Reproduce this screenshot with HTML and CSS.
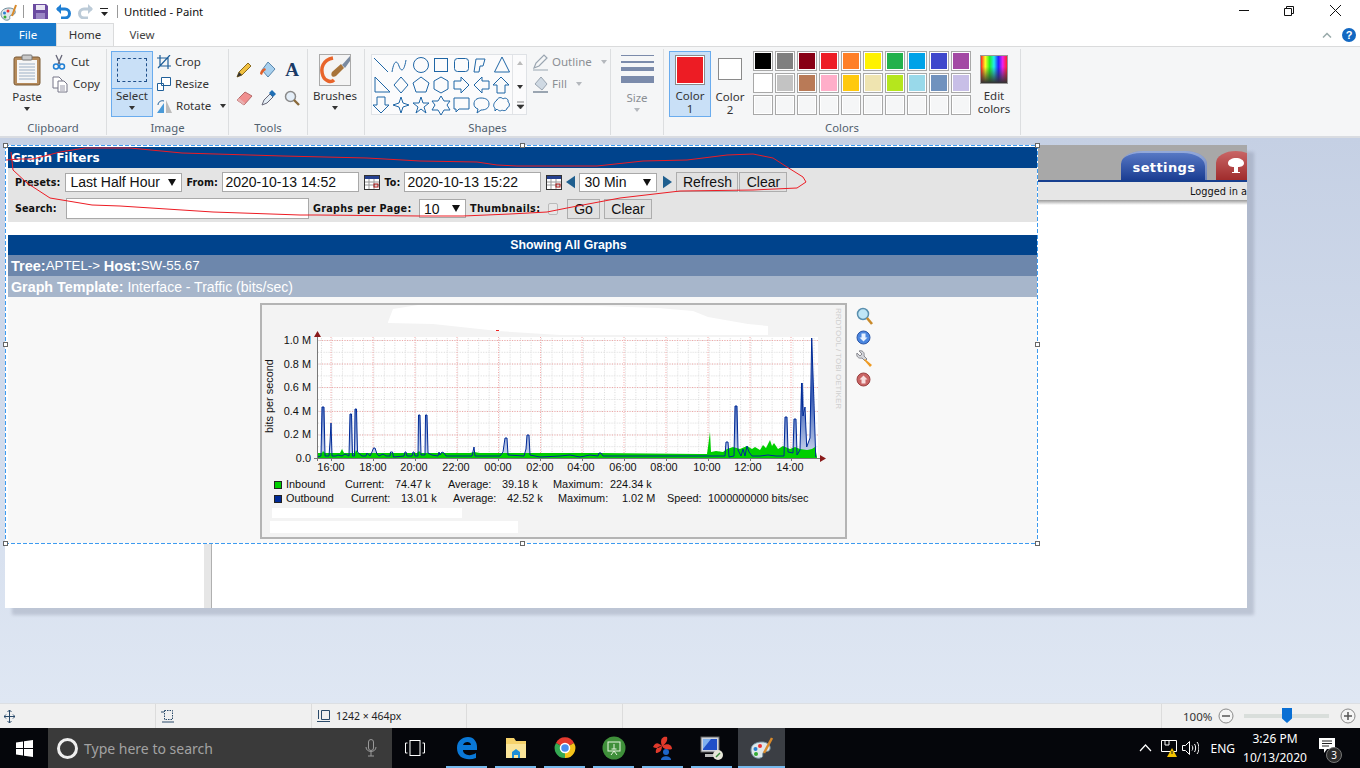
FILE: index.html
```html
<!DOCTYPE html>
<html lang="en">
<head>
<meta charset="utf-8">
<title>Untitled - Paint</title>
<link rel="stylesheet" href="styles.css">
</head>
<body>
<div class="app">
  <header class="titlebar">
    <svg class="ti app-ico" width="18" height="20" viewBox="0 0 18 20"><path d="M1 12c0-4 4-6 8-6s7 2 6 5-4 1-5 3 1 3-2 4-7-2-7-6z" fill="#dfe7ea" stroke="#6b8a99"/><circle cx="4.500" cy="11" r="1.500" fill="#2a7fd0"/><circle cx="8" cy="9" r="1.500" fill="#e33"/><circle cx="5" cy="15" r="1.500" fill="#3a3"/><path d="M12 14L16 3" stroke="#d98a2b" stroke-width="2"/></svg>
    <i class="tsep sep1"></i>
    <svg class="ti save" width="15" height="15" viewBox="0 0 15 15"><path d="M0 0h13l2 2v13H0z" fill="#6a4aa0"/><path d="M3 1h9v5H3z" fill="#e8e4f2"/><path d="M3 9h9v6H3z" fill="#9a86c4"/></svg>
    <svg class="ti undo" width="15" height="15" viewBox="0 0 15 15"><path d="M1 5h8a4 4 0 0 1 0 9H5" fill="none" stroke="#1f7fd4" stroke-width="3"/><path d="M0 5l5-5v10z" fill="#1f7fd4"/></svg>
    <svg class="ti redo" width="15" height="15" viewBox="0 0 15 15"><path d="M14 5H6a4 4 0 0 0 0 9h4" fill="none" stroke="#bccbd8" stroke-width="3"/><path d="M15 5l-5-5v10z" fill="#bccbd8"/></svg>
    <svg class="ti qcaret" width="9" height="8" viewBox="0 0 9 8"><path d="M0 0h8v1H0zM1 4h7L4.500 8z" fill="#222"/></svg>
    <i class="tsep sep2"></i>
    <span class="wintitle">Untitled - Paint</span>
    <div class="winbtns">
      <svg width="46" height="23" viewBox="0 0 46 23"><path d="M18 10.500h10" stroke="#111"/></svg>
      <svg width="46" height="23" viewBox="0 0 46 23"><path d="M17.500 8.500h7v7h-7zM19.500 8.500v-2h7v7h-2" fill="none" stroke="#111"/></svg>
      <svg width="46" height="23" viewBox="0 0 46 23"><path d="M17 5l11 11M28 5L17 16" stroke="#111"/></svg>
    </div>
  </header>

  <nav class="tabs">
    <span class="tab file">File</span>
    <span class="tab home">Home</span>
    <span class="tab view">View</span>
    <div class="helpbox">
      <svg width="10" height="6" viewBox="0 0 10 6"><path d="M1 5.500l4-4 4 4" fill="none" stroke="#9aa" stroke-width="1.500"/></svg>
      <span class="help">?</span>
    </div>
  </nav>

  <section class="ribbon">
    <div class="group g-clip">
      <div class="gbody">
        <div class="big paste">
          <svg class="big-ico" width="28" height="32" viewBox="0 0 28 32"><rect x="1" y="3" width="26" height="28" rx="2" fill="#b58a5a" stroke="#7a5a36"/><rect x="4" y="6" width="20" height="23" fill="#f6f6f6"/><path d="M6 10h16M6 13h16M6 16h16M6 19h16M6 22h16M6 25h16" stroke="#9db0c6"/><rect x="9" y="1" width="10" height="5" rx="1" fill="#c9c9c9" stroke="#777"/></svg>
          <span class="lab">Paste</span><i class="caret"></i>
        </div>
        <div class="smalls s-clip">
          <div class="sm"><svg width="14" height="16" viewBox="0 0 14 16"><path d="M4 1l4 9M10 1L6 10" stroke="#667" stroke-width="1.300"/><circle cx="4" cy="12.500" r="2.500" fill="none" stroke="#1f7fd4" stroke-width="1.500"/><circle cx="10" cy="12.500" r="2.500" fill="none" stroke="#1f7fd4" stroke-width="1.500"/></svg><span>Cut</span></div>
          <div class="sm"><svg width="16" height="17" viewBox="0 0 16 17"><path d="M1 1h6l3 3v8H1z" fill="#fff" stroke="#778"/><path d="M6 5h6l3 3v8H6z" fill="#fff" stroke="#778"/><path d="M8 10h5M8 12h5M8 14h5" stroke="#99a"/></svg><span>Copy</span></div>
        </div>
      </div>
      <div class="glabel">Clipboard</div>
    </div>

    <div class="group g-image">
      <div class="gbody">
        <div class="selectbtn">
          <div class="sel-top"><i class="sel-dash"></i></div>
          <div class="sel-bot"><span class="lab">Select</span><i class="caret"></i></div>
        </div>
        <div class="smalls s-image">
          <div class="sm"><svg width="14" height="14" viewBox="0 0 14 14"><path d="M3 0v11h11M0 3h11v11M13 0L1 13" fill="none" stroke="#1f5f99" stroke-width="1.200"/></svg><span>Crop</span></div>
          <div class="sm"><svg width="14" height="14" viewBox="0 0 14 14"><path d="M4.500.500h9v8h-9zM.500 6.500h6v7h-6z" fill="#fff" stroke="#1f5f99"/></svg><span>Resize</span></div>
          <div class="sm"><svg width="15" height="14" viewBox="0 0 15 14"><path d="M9 1v13h6z" fill="#bbb"/><path d="M7 14V4L0 14z" fill="#4a9ad8"/><path d="M1 6c0-3 3-5 6-4" fill="none" stroke="#1f5f99"/></svg><span>Rotate</span><i class="caret inline"></i></div>
        </div>
      </div>
      <div class="glabel">Image</div>
    </div>

    <div class="group g-tools">
      <div class="gbody">
        <div class="toolgrid">
          <svg width="16" height="16" viewBox="0 0 16 16"><path d="M1 15l2-5L12 1l3 3-9 9z" fill="#f0c040" stroke="#8a6a20"/><path d="M1 15l2-5 3 3z" fill="#333"/></svg>
          <svg width="18" height="18" viewBox="0 0 18 18"><path d="M9 1l7 7-7 8-6-7z" fill="#a8d0ee" stroke="#5a87ad"/><path d="M1 13c0-3 2-5 5-6l1 2c-2 1-3 2-4 5z" fill="#e0602a"/></svg>
          <span class="aglyph">A</span>
          <svg width="17" height="15" viewBox="0 0 17 15"><path d="M1 9l8-8 7 4-8 9z" fill="#f08f8f" stroke="#b56a6a"/><path d="M1 9l7 5 1-2-6-5z" fill="#e8b0b0"/></svg>
          <svg width="15" height="16" viewBox="0 0 15 16"><path d="M1 15l2-5 6-6 3 3-6 6z" fill="#e4eef6" stroke="#667"/><path d="M8 3l3-3 4 4-3 3z" fill="#1f6fb5"/></svg>
          <svg width="16" height="16" viewBox="0 0 16 16"><circle cx="6.500" cy="6.500" r="5" fill="#e4eef8" stroke="#8a8a8a" stroke-width="1.500"/><path d="M10 10l5 5" stroke="#8a6a3a" stroke-width="2.400"/></svg>
        </div>
      </div>
      <div class="glabel">Tools</div>
    </div>

    <div class="group g-brush">
      <div class="gbody">
        <div class="big brushes">
          <svg class="big-ico" width="32" height="32" viewBox="0 0 32 32"><rect x=".5" y=".5" width="31" height="31" fill="#f4f4f4" stroke="#aaa"/><path d="M14 4C4 6 1 14 4 22c2 5 8 7 11 4" fill="none" stroke="#e8642a" stroke-width="3.500"/><path d="M13 18l9-8 3 4-8 8c-3 2-6 0-4-4z" fill="#a8743a"/><path d="M23 11l8-9v5l-5 7z" fill="#7a8aa0"/></svg>
          <span class="lab">Brushes</span><i class="caret"></i>
        </div>
      </div>
      <div class="glabel wide">&nbsp;</div>
    </div>

    <div class="group g-shapes">
      <div class="gbody shapes-body">
        <div class="gallery">
          <svg width="141" height="60" viewBox="371 54 141 60" fill="none" stroke="#1f66a6" stroke-width="1">
            <path d="M374 57l14 14M392 71c2-12 5-12 7-6s5 6 7-6"/><circle cx="421" cy="64" r="7.500"/><rect x="434.500" y="57.500" width="13" height="13"/><rect x="454.500" y="57.500" width="14" height="13" rx="3"/><path d="M474 71l2-13h9l-2 7h-3l-1 6zM502 56l7.500 15h-15z"/>
            <path d="M375 76v15h15zM401 76l7 8-7 8-7-8zM421 76l8 6-3 9h-10l-3-9zM441 76l7 4v8l-7 4-7-4v-8zM454 80h7v-4l8 8-8 8v-4h-7zM489 80h-7v-4l-8 8 8 8v-4h7zM501 76l8 8h-4v8h-8v-8h-4z"/>
            <path d="M377 96h8v8h4l-8 8-8-8h4zM401 96l2 6 6 2-6 2-2 6-2-6-6-2 6-2zM421 96l2 6h6l-5 4 2 6-5-4-5 4 2-6-5-4h6zM441 95l3 5h6l-3 4 3 5h-6l-3 5-3-5h-6l3-5-3-4h6z"/>
            <path d="M454 97h15v11h-10l-3 3v-3h-2zM481 97c5 0 8 2 8 6s-3 6-8 6l-4 3 1-4c-3-1-4-3-4-5 0-4 3-6 7-6zM497 99c1-3 5-3 6-1 2-2 6 0 5 3 2 1 2 5-1 6 0 3-4 3-5 2-2 2-4 0-5-1l-2 2v-3c-2-1-2-5 2-8z"/>
          </svg>
          <div class="gscroll">
            <svg width="15" height="60" viewBox="0 0 15 60"><path d="M4 22l3-4 3 4z" fill="#bbb" transform="translate(0 -12)"/><path d="M4 30h6l-3 4z" fill="#333"/><path d="M4 47h7M4 50h7l-3.500 4z" stroke="#333" fill="#333" stroke-width=".6"/></svg>
          </div>
        </div>
        <div class="smalls s-shape">
          <div class="sm dim"><svg width="15" height="17" viewBox="0 0 15 17"><path d="M1 14l2-5 8-8 3 3-8 8zM0 16h15" fill="#f5f6f7" stroke="#9aa5b1" stroke-width="1.200"/></svg><span>Outline</span><i class="caret inline pale"></i></div>
          <div class="sm dim"><svg width="15" height="17" viewBox="0 0 15 17"><path d="M8 1l6 7-5 6-7-6z" fill="#cfd9e3" stroke="#9aa5b1"/><path d="M0 16h15" stroke="#9aa5b1" stroke-width="2"/></svg><span>Fill</span><i class="caret inline pale"></i></div>
        </div>
      </div>
      <div class="glabel">Shapes</div>
    </div>

    <div class="group g-size">
      <div class="gbody">
        <div class="big size">
          <div class="lines"><i class="l1"></i><i class="l2"></i><i class="l3"></i><i class="l4"></i></div>
          <span class="lab gray">Size</span><i class="caret pale"></i>
        </div>
      </div>
      <div class="glabel wide">&nbsp;</div>
    </div>

    <div class="group g-colors">
      <div class="gbody">
        <div class="colorbtn active"><i class="swatch red"></i><span class="lab">Color<br>1</span></div>
        <div class="colorbtn"><i class="swatch white"></i><span class="lab">Color<br>2</span></div>
        <div class="palette">
          <i class="c c1"></i><i class="c c2"></i><i class="c c3"></i><i class="c c4"></i><i class="c c5"></i><i class="c c6"></i><i class="c c7"></i><i class="c c8"></i><i class="c c9"></i><i class="c c10"></i>
          <i class="c c11"></i><i class="c c12"></i><i class="c c13"></i><i class="c c14"></i><i class="c c15"></i><i class="c c16"></i><i class="c c17"></i><i class="c c18"></i><i class="c c19"></i><i class="c c20"></i>
          <i class="c"></i><i class="c"></i><i class="c"></i><i class="c"></i><i class="c"></i><i class="c"></i><i class="c"></i><i class="c"></i><i class="c"></i><i class="c"></i>
        </div>
        <div class="editcolors"><i class="rainbow"></i><span class="lab">Edit<br>colors</span></div>
      </div>
      <div class="glabel">Colors</div>
    </div>
  </section>

  <main class="canvas">
    <div class="page">
      <div class="under">
        <div class="u-head">
          <span class="ptab settings">settings</span>
          <span class="ptab redtab"><svg width="18" height="17" viewBox="0 0 18 17"><path d="M9 1c4 0 8 2 8 5s-3 4-6 4v5h2v1H5v-1h2v-5C4 10 1 9 1 6s4-5 8-5z" fill="#fff"/></svg></span>
        </div>
        <div class="u-line"></div>
        <div class="u-login"><span>Logged in a</span></div>
        <div class="u-shadow"></div>
        <div class="u-body"><div class="u-side"></div><div class="u-gut"></div><div class="u-main"></div></div>
      </div>

      <div class="selection">
        <div class="bar filterhead">Graph Filters</div>
        <div class="filters">
          <div class="frow">
            <b class="flabel presets">Presets:</b>
            <span class="fsel fs-preset">Last Half Hour<i class="arrow"></i></span>
            <b class="flabel from">From:</b>
            <span class="finp fi-date">2020-10-13 14:52</span>
            <svg class="cal" width="16" height="16" viewBox="0 0 16 16"><rect x=".5" y="1.500" width="15" height="14" fill="#fff" stroke="#333"/><path d="M1 2h14v3H1z" fill="#25408f"/><path d="M1 8h14M1 11h14M5 5v10M10 5v10" stroke="#999"/><rect x="10" y="10" width="4" height="3" fill="none" stroke="#a11"/></svg>
            <b class="flabel to">To:</b>
            <span class="finp fi-date">2020-10-13 15:22</span>
            <svg class="cal" width="16" height="16" viewBox="0 0 16 16"><rect x=".5" y="1.500" width="15" height="14" fill="#fff" stroke="#333"/><path d="M1 2h14v3H1z" fill="#25408f"/><path d="M1 8h14M1 11h14M5 5v10M10 5v10" stroke="#999"/><rect x="10" y="10" width="4" height="3" fill="none" stroke="#a11"/></svg>
            <svg class="nav left" width="9" height="14" viewBox="0 0 10 14"><path d="M10 0v14L0 7z" fill="#1f5f8f"/></svg>
            <span class="fsel fs-span">30 Min<i class="arrow"></i></span>
            <svg class="nav right" width="9" height="14" viewBox="0 0 10 14"><path d="M0 0v14l10-7z" fill="#1f5f8f"/></svg>
            <span class="fbtn refresh">Refresh</span>
            <span class="fbtn clear1">Clear</span>
          </div>
          <div class="frow second">
            <b class="flabel search">Search:</b>
            <span class="finp fi-search"></span>
            <b class="flabel perpage">Graphs per Page:</b>
            <span class="fsel fs-count">10<i class="arrow"></i></span>
            <b class="flabel thumbs">Thumbnails:</b>
            <i class="check"></i>
            <span class="fbtn go">Go</span>
            <span class="fbtn clear2">Clear</span>
          </div>
        </div>
        <div class="spacer"></div>
        <div class="bar showing">Showing All Graphs</div>
        <div class="tree"><b>Tree:</b>APTEL-&gt; <b>Host:</b>SW-55.67</div>
        <div class="tmpl"><b>Graph Template:</b> Interface - Traffic (bits/sec)</div>
        <div class="graphrow">
          <svg class="chart" width="587" height="236" viewBox="260 303 587 236">
            <defs>
              <pattern id="minor" x="321" y="340" width="10.480" height="11.800" patternUnits="userSpaceOnUse"><path d="M.5 0v11.800M0 .5h10.480" stroke="#d6d6d6" stroke-dasharray="1 1.500" fill="none"/></pattern>
              <linearGradient id="spike" gradientUnits="userSpaceOnUse" x1="0" y1="400" x2="0" y2="458"><stop offset="0" stop-color="#3f62b8"/><stop offset="1" stop-color="#d3dcf0"/></linearGradient>
            </defs>
            <rect x="261" y="304" width="585" height="234" fill="#f3f3f3" stroke="#b4b4b4" stroke-width="2"/>
            <rect x="317" y="337" width="501" height="121" fill="#fff"/>
            <rect x="317" y="337" width="501" height="121" fill="url(#minor)"/>
            <path class="major" d="M317 340.500h501M317 364h501M317 387.500h501M317 411.500h501M317 435h501M331 337v121M373 337v121M415 337v121M457 337v121M498.500 337v121M540.500 337v121M582 337v121M624 337v121M666 337v121M708 337v121M750 337v121M791 337v121"/>
            <polygon class="outfill" points="321,456 322,407 324,407 325,456 329,456 330,442 331,423 332,456 349,456 350,414 351.500,414 352.500,456 354.500,456 355,409 356.500,409 357.500,456 372,456 373.500,448 375,448 377,456 418,456 418.500,415 420,415 421,456 425,456 425.500,415 427,415 428,456 472,456 474,447 475,456 503,456 505,438 507,438 508,456 525,456 527,435 529,435 530,456 725,456 726,442 728,442 729,456 734,456 735,406 737,406 738,456 784,456 785,417 787,417 788,456 793,456 794,419 796,419 797,456 800,456 801,383 803,383 804,416 805,407 807,447 810,438 812,338 814,412 816,457"/>
            <polygon class="inbound" points="317,458 317,453 322,453 323,451 325,453 340,453 342,449 344,453 355,453 356,450 358,453 417,453 419,451 421,453 470,453 474,452 480,453 600,453 700,454 707,454 708,447 710,432 711,452 716,451 723,452 727,449 733,447 740,449 747,446 752,449 755,447 760,450 763,445 766,448 770,440 772,446 774,443 778,449 783,446 790,449 795,447 800,449 807,450 812,449 815,447 817,457 817,458"/>
            <polyline class="outbound" points="317,457 321,456 322,407 324,407 325,456 329,456 330,442 331,423 332,456 336,456 338,455 342,456 345,454 349,456 350,414 351.500,414 352.500,456 354.500,456 355,409 356.500,409 357.500,452 362,456 366,456 367,453 370,456 372,452 373.500,448 375,448 377,454 379,456 383,454 386,456 390,456 390.500,452 392.500,452 393.500,457 404,456 405,452 406,452 407,456 412,456 413,452 414,452 415,456 418,456 418.500,415 420,415 421,455 425,455 425.500,415 427,415 428,453 432,455 438,456 439,452 440,455 442,452 444,453 446,456 472,456 474,447 475,456 500,456 503,452 505,438 507,438 508,455 524,456 526,449 527,435 529,435 530,455 540,457 560,456 570,455 580,457 590,455 598,456 599,453 601,453 603,456 725,456 726,442 728,442 729,457 734,456 735,406 737,406 738,450 741,456 743,449 745,456 747,446 749,452 752,456 760,456 768,455 776,456 784,456 785,417 787,417 788,452 793,453 794,419 796,419 797,455 800,450 801.700,383 803,416 805,407 806.700,447 810,438 811.700,338 814.300,412 815.700,457"/>
            <path class="axis" d="M317.500 335v126M314 458.500h506M331.500 458v3M373.500 458v3M415.500 458v3M457.500 458v3M498.500 458v3M540.500 458v3M582.500 458v3M624.500 458v3M666.500 458v3M708.500 458v3M750.500 458v3M791.500 458v3"/>
            <path class="tip" d="M317.500 331l3.500 6h-7zM826 458.500l-6-3.500v7z"/>
            <g class="ylab">
              <text x="311" y="344">1.0 M</text><text x="311" y="368">0.8 M</text><text x="311" y="391">0.6 M</text><text x="311" y="415">0.4 M</text><text x="311" y="438">0.2 M</text><text x="311" y="462">0.0</text>
            </g>
            <g class="xlab">
              <text x="331" y="471">16:00</text><text x="373" y="471">18:00</text><text x="414" y="471">20:00</text><text x="456" y="471">22:00</text><text x="498" y="471">00:00</text><text x="540" y="471">02:00</text><text x="581" y="471">04:00</text><text x="623" y="471">06:00</text><text x="664" y="471">08:00</text><text x="707" y="471">10:00</text><text x="748" y="471">12:00</text><text x="790" y="471">14:00</text>
            </g>
            <text class="yaxis" transform="translate(273 433) rotate(-90)">bits per second</text>
            <text class="mark" transform="translate(836 308) rotate(90)">RRDTOOL / TOBI OETIKER</text>
            <rect x="274.500" y="481.500" width="7" height="7" fill="#00cf00" stroke="#222"/>
            <rect x="274.500" y="495.500" width="7" height="7" fill="#002a97" stroke="#222"/>
            <g class="legend">
              <text x="286" y="488">Inbound</text><text x="345" y="488">Current:</text><text x="395" y="488">74.47 k</text><text x="448" y="488">Average:</text><text x="502" y="488">39.18 k</text><text x="553" y="488">Maximum:</text><text x="610" y="488">224.34 k</text>
              <text x="286" y="502">Outbound</text><text x="351" y="502">Current:</text><text x="401" y="502">13.01 k</text><text x="453" y="502">Average:</text><text x="507" y="502">42.52 k</text><text x="558" y="502">Maximum:</text><text x="622" y="502">1.02 M</text><text x="667" y="502">Speed:</text><text x="708" y="502">1000000000 bits/sec</text>
            </g>
            <path fill="#fff" d="M388 322l5-13 25-4 180 1 60 2 35 3 15 6 40 7 20 2v9H560l-62-4-65-7-45-1z"/>
            <path fill="#e22" d="M496 330h3v1h-3z"/>
            <path fill="#fff" d="M272 508h190v10H272zM270 521h248v12H270z"/>
          </svg>
          <div class="gicons">
            <svg width="17" height="18" viewBox="0 0 17 18"><circle cx="7" cy="7" r="5.500" fill="#bfe6f7" stroke="#5a8fae" stroke-width="1.500"/><path d="M11 11l5 6" stroke="#c98a2a" stroke-width="2.600"/></svg>
            <svg width="15" height="15" viewBox="0 0 15 15"><circle cx="7.500" cy="7.500" r="6.500" fill="#4a86e0" stroke="#2a56a8"/><path d="M5.500 3.500h4v4h2l-4 4-4-4h2z" fill="#e6f0ff"/></svg>
            <svg width="17" height="17" viewBox="0 0 17 17"><path d="M1 3l3 3 2-2-3-3c3-1 6 1 5 5l3 3-2 2-3-3C2 9 0 6 1 3z" fill="#d4d6dc" stroke="#8a8a90"/><path d="M9 9l7 6-2 2-6-7z" fill="#ee9a22"/></svg>
            <svg width="15" height="15" viewBox="0 0 15 15"><circle cx="7.500" cy="7.500" r="6.500" fill="#c96464" stroke="#9a4040"/><path d="M5.500 11.500h4v-4h2l-4-4-4 4h2z" fill="#f7dede"/></svg>
          </div>
        </div>
      </div>

      <svg class="freehand" width="1242" height="463" viewBox="5 145 1242 463"><polyline points="6,160 20,159 33,159 60,152 85,148 130,148 182,153 283,156 367,158 420,161 477,162 497,165 517,166 597,166 643,161 687,160 727,155 753,154 773,158 787,167 803,177 806,182 797,188 753,190 680,191 620,198 567,208 547,212 510,214 463,216 420,216 317,215 300,215 213,212 120,206 92,205 50,198 27,183 13,170 11,152"/></svg>

      <i class="hd h-tl"></i><i class="hd h-tc"></i><i class="hd h-tr"></i><i class="hd h-ml"></i><i class="hd h-mr"></i><i class="hd h-bl"></i><i class="hd h-bc"></i><i class="hd h-br"></i>
    </div>
  </main>

  <footer class="status">
    <div class="st st1"><svg width="11" height="13" viewBox="0 0 11 13"><path d="M5.500 0v13M0 6.500h11M3.500 2l2-2 2 2M3.500 11l2 2 2-2M2 4.500l-2 2 2 2M9 4.500l2 2-2 2" fill="none" stroke="#2a4a6a"/></svg></div>
    <div class="st st2"><svg width="14" height="14" viewBox="0 0 14 14"><path d="M3.500 1.500h8v9h-8z" fill="none" stroke="#2a4a6a" stroke-dasharray="1.500 1"/><path d="M0 3h3M1 13h12" stroke="#2a4a6a"/></svg></div>
    <div class="st st3"><svg width="14" height="14" viewBox="0 0 14 14"><path d="M4.500 1.500h8v9h-8z" fill="none" stroke="#2a4a6a"/><path d="M1.500 1v9M0 12.500h13" stroke="#2a4a6a"/></svg><span>1242 × 464px</span></div>
    <div class="st st4"></div>
    <div class="st st5"></div>
    <div class="zoom">
      <span class="pct">100%</span>
      <svg width="16" height="16" viewBox="0 0 16 16"><circle cx="8" cy="8" r="7" fill="#f5f5f5" stroke="#8a8a8a"/><path d="M4 8h8" stroke="#555" stroke-width="1.500"/></svg>
      <div class="slider"><i class="thumb"></i></div>
      <svg width="16" height="16" viewBox="0 0 16 16"><circle cx="8" cy="8" r="7" fill="#f5f5f5" stroke="#8a8a8a"/><path d="M4 8h8M8 4v8" stroke="#555" stroke-width="1.500"/></svg>
    </div>
  </footer>

  <footer class="taskbar">
    <div class="startbtn"><svg width="17" height="17" viewBox="0 0 17 17"><path d="M0 2.500L7 1.500v6.500H0zM8 1.300L17 0v8H8zM0 9h7v6.500L0 14.500zM8 9h9v8l-9-1.300z" fill="#fff"/></svg></div>
    <div class="searchbox">
      <i class="cortana"></i>
      <span class="searchtext">Type here to search</span>
      <svg class="mic" width="12" height="18" viewBox="0 0 12 18"><rect x="3.500" y=".5" width="5" height="11" rx="2.500" fill="none" stroke="#9a9a9a"/><path d="M1 8c0 6 10 6 10 0M6 13v4M3 17h6" fill="none" stroke="#9a9a9a"/></svg>
    </div>
    <div class="tb taskview"><svg width="20" height="16" viewBox="0 0 20 16"><rect x="5" y=".5" width="10" height="15" fill="none" stroke="#fff"/><path d="M2.500 3H.5v10h2M17.500 3h2v10h-2" fill="none" stroke="#fff"/></svg></div>
    <div class="tb run"><svg width="22" height="24" viewBox="0 0 22 24"><path d="M1 12C1 5 6 1 12 1c6 0 9 5 9 10v3H7c0 5 7 7 13 3v5c-8 3-19 1-19-10zm6-3h8c0-4-7-4-8 0z" fill="#0a78d7"/></svg></div>
    <div class="tb run"><svg width="22" height="20" viewBox="0 0 22 20"><path d="M1 0h8l2 3h10v17H1z" fill="#f6d26b"/><path d="M1 6h20v14H1z" fill="#fbe59a"/><path d="M7 20v-6l4-3 4 3v6h-2v-3H9v3z" fill="#1f8fd6"/></svg></div>
    <div class="tb run"><svg width="22" height="22" viewBox="0 0 22 22"><path d="M11 11L2 6a10 10 0 0 1 18 0z" fill="#e53a2f"/><path d="M11 11l9-5a10 10 0 0 1-9 15z" fill="#f5c21a"/><path d="M11 11v10A10 10 0 0 1 2 6z" fill="#35a853"/><circle cx="11" cy="11" r="4.500" fill="#4a8ef0" stroke="#fff" stroke-width="1.500"/></svg></div>
    <div class="tb run"><svg width="24" height="24" viewBox="0 0 24 24"><circle cx="12" cy="12" r="11.500" fill="#3f8f3a"/><rect x="6" y="6" width="12" height="9" fill="none" stroke="#e8f5e0"/><path d="M12 8v5M9.500 13h5M12 15l-3 4M12 15l3 4" stroke="#e8f5e0"/></svg></div>
    <div class="tb run"><svg width="22" height="24" viewBox="0 0 22 24"><path d="M10 10C4 4 2 9 1 11c3 2 6 1 9-1zM10 10c-3-8 2-10 5-9 1 3-1 7-5 9zM10 10c7-4 10 0 10 3-3 1-8 1-10-3zM10 10c0 5-3 7-6 7-1-3 1-7 6-7z" fill="#e0392b"/><circle cx="14" cy="16" r="3" fill="#1e66c9"/><path d="M9 24c0-5 10-5 10 0z" fill="#1e66c9"/></svg></div>
    <div class="tb run"><svg width="24" height="24" viewBox="0 0 24 24"><rect x="1" y="1" width="18" height="15" fill="#d0d4dc" stroke="#666"/><rect x="3" y="3" width="14" height="11" fill="#1f4fc8"/><path d="M3 3l8 0-8 10z" fill="#7fb0ef"/><rect x="5" y="18" width="12" height="3" fill="#bbb"/><circle cx="18" cy="19" r="5" fill="#e6e6d8"/><path d="M16 21l4-4" stroke="#3a8a3a" stroke-width="1.500"/></svg></div>
    <div class="tb run active"><svg width="24" height="24" viewBox="0 0 24 24"><path d="M1 14c0-6 6-8 11-8s9 3 8 7-6 1-7 4 1 4-3 5-9-2-9-8z" fill="#dfe7ea" stroke="#7895a3"/><circle cx="5.500" cy="13" r="2" fill="#2a7fd0"/><circle cx="10" cy="10" r="2" fill="#e33"/><circle cx="6" cy="18" r="2" fill="#3a3"/><path d="M14 17L22 2" stroke="#d98a2b" stroke-width="2.500"/></svg></div>
    <div class="tray">
      <svg class="chev" width="13" height="8" viewBox="0 0 13 8"><path d="M1 7l5.500-6L12 7" fill="none" stroke="#fff" stroke-width="1.200"/></svg>
      <svg class="netw" width="18" height="18" viewBox="0 0 18 18"><path d="M1.500 1.500h15v11h-15zM5 1v5h4V1" fill="none" stroke="#fff"/><path d="M12 9l5 9H7z" fill="#f5c400"/><path d="M12 12v3" stroke="#222"/></svg>
      <svg class="vol" width="17" height="14" viewBox="0 0 17 14"><path d="M.5 4.500h3l4-4v13l-4-4h-3z" fill="none" stroke="#fff"/><path d="M10 4.500c1 1 1 4 0 5M12.500 3c1.500 2 1.500 6 0 8M15 1c2.500 3 2.500 9 0 12" fill="none" stroke="#fff"/></svg>
      <span class="eng">ENG</span>
      <div class="clock"><span>3:26 PM</span><span>10/13/2020</span></div>
      <div class="notif"><svg width="16" height="15" viewBox="0 0 16 15"><path d="M0 0h16v11H8l-3 4v-4H0z" fill="#fff"/><path d="M3 3h10M3 5.500h10M3 8h7" stroke="#222"/></svg><span class="badge">3</span></div>
    </div>
  </footer>
</div>
</body>
</html>
```
FILE: styles.css
```css
* { box-sizing: border-box; }
html, body { margin: 0; padding: 0; height: 100%; overflow: hidden; }
body { font-family: "Noto Sans", "Open Sans", sans-serif; font-size: 11.5px; color: #333; background: #fff; }
i { display: block; font-style: normal; }
.app { width: 1360px; height: 768px; display: flex; flex-direction: column; overflow: hidden; }

/* title bar */
.titlebar { height: 23px; display: flex; align-items: center; background: #fff; flex: none; }
.ti { flex: none; }
.tsep { width: 1px; height: 13px; background: #999; }
.sep1 { margin-left: 5px; }
.save { margin-left: 9px; }
.undo { margin-left: 8px; }
.redo { margin-left: 7px; }
.qcaret { margin-left: 7px; }
.sep2 { margin-left: 8px; }
.wintitle { margin-left: 6px; font-size: 11.3px; color: #111; }
.winbtns { margin-left: auto; display: flex; margin-right: 1px; }

/* tabs */
.tabs { height: 23px; display: flex; align-items: stretch; background: #fff; flex: none; position: relative; }
.tab { display: flex; align-items: center; justify-content: center; font-size: 11.5px; padding-bottom: 1px; }
.file { width: 56px; background: #1979ca; color: #fff; }
.home { width: 58px; color: #333; background: #f5f6f7; border: 1px solid #dadbdc; border-bottom: 0; }
.view { width: 56px; color: #444; }
.helpbox { margin-left: auto; display: flex; align-items: center; gap: 10px; padding-right: 4px; }
.help { width: 14px; height: 14px; border-radius: 50%; background: #1268c2; color: #fff; font: bold 11px "Liberation Sans", sans-serif; display: flex; align-items: center; justify-content: center; }

/* ribbon */
.ribbon { height: 92px; flex: none; display: flex; background: #f5f6f7; border-top: 1px solid #dadbdc; border-bottom: 2px solid #d9dce1; padding-top: 2px; }
.group { display: flex; flex-direction: column; border-right: 1px solid #dcdee0; flex: none; height: 86px; }
.gbody { flex: 1; display: flex; padding-top: 2px; }
.glabel { height: 15px; text-align: center; color: #51606e; line-height: 15px; font-size: 11.3px; }
.g-clip { width: 107px; }
.g-image { width: 122px; }
.g-tools { width: 79px; }
.g-brush { width: 57px; }
.g-shapes { width: 246px; }
.g-size { width: 53px; }
.g-colors { width: 357px; }
.lab { text-align: center; line-height: 13px; color: #333; display: block; }
.lab.gray { color: #8b8f94; }
.caret { width: 0; height: 0; border: 3.5px solid transparent; border-top: 4px solid #333; border-bottom: 0; margin-top: 4px; }
.caret.inline { margin: 0 0 0 5px; }
.caret.pale { border-top-color: #b4b8bd; }
.big { display: flex; flex-direction: column; align-items: center; }
.big-ico { flex: none; }
.paste { width: 42px; margin-left: 6px; padding-top: 3px; }
.paste .lab { margin-top: 4px; }
.smalls { display: flex; flex-direction: column; }
.sm { height: 22px; display: flex; align-items: center; gap: 5px; white-space: nowrap; }
.sm svg { flex: none; }
.sm span { margin-top: -2px; }
.s-clip { margin-left: 4px; }
.selectbtn { width: 42px; height: 66px; margin-left: 4px; border: 1px solid #6aacee; background: #c9e0f7; display: flex; flex-direction: column; }
.sel-top { height: 37px; border-bottom: 1px solid #6aacee; padding: 6px 5px; }
.sel-dash { width: 30px; height: 24px; border: 1px dashed #1f4f8a; }
.sel-bot { flex: 1; display: flex; flex-direction: column; align-items: center; }
.s-image { margin-left: 4px; }
.s-image .sm { gap: 4px; }
.toolgrid { display: grid; grid-template-columns: repeat(3, 24px); grid-auto-rows: 28px; justify-items: center; align-items: center; margin: 5px 0 0 3px; }
.aglyph { font: bold 19px "Liberation Serif", serif; color: #1a3a66; line-height: 18px; }
.brushes { width: 54px; padding-top: 3px; }
.brushes .lab { margin-top: 3px; }
.shapes-body { padding-left: 6px; }
.gallery { width: 156px; height: 61px; margin-top: 3px; background: #fbfbfc; border: 1px solid #dfe2e6; display: flex; }
.gallery > svg { flex: none; margin-left: -1px; }
.gscroll { width: 15px; border-left: 1px solid #e2e4e7; }
.s-shape { margin-left: 6px; }
.dim { color: #8b8f94; gap: 4px; }
.g-size .size { width: 52px; padding-top: 4px; }
.lines { width: 33px; display: flex; flex-direction: column; gap: 4.5px; }
.lines i { background: #7b8bab; }
.l1 { height: 1px; }
.l2 { height: 2px; }
.l3 { height: 4px; }
.l4 { height: 7px; }
.size .lab { margin-top: 8px; }
.g-colors .gbody { padding-left: 5px; }
.colorbtn { width: 42px; height: 66px; display: flex; flex-direction: column; align-items: center; border: 1px solid transparent; padding-top: 6px; }
.colorbtn.active { background: #c9e0f7; border-color: #6aacee; padding-top: 3px; }
.colorbtn .lab { margin-top: 6px; }
.colorbtn.active .lab { margin-top: 4px; }
.colorbtn + .colorbtn { margin-left: -2px; }
.swatch { border: 1px solid #8a8a8a; }
.swatch.red { width: 30px; height: 30px; background: #ed1c24; box-shadow: inset 0 0 0 1px #fff; }
.swatch.white { width: 24px; height: 24px; background: #fff; margin-bottom: 4px; }
.palette { display: grid; grid-template-columns: repeat(10, 20px); grid-auto-rows: 20px; gap: 2px; margin: 0 0 0 2px; }
.c { border: 1px solid #a8a8a8; box-shadow: inset 0 0 0 1px #fff; background: #f5f6f7; }
.c1 { background: #000; } .c2 { background: #7f7f7f; } .c3 { background: #880015; } .c4 { background: #ed1c24; } .c5 { background: #ff7f27; }
.c6 { background: #fff200; } .c7 { background: #22b14c; } .c8 { background: #00a2e8; } .c9 { background: #3f48cc; } .c10 { background: #a349a4; }
.c11 { background: #fff; } .c12 { background: #c3c3c3; } .c13 { background: #b97a57; } .c14 { background: #ffaec9; } .c15 { background: #ffc90e; }
.c16 { background: #efe4b0; } .c17 { background: #b5e61d; } .c18 { background: #99d9ea; } .c19 { background: #7092be; } .c20 { background: #c8bfe7; }
.editcolors { width: 42px; margin-left: 2px; display: flex; flex-direction: column; align-items: center; padding-top: 4px; }
.rainbow { width: 28px; height: 29px; border: 1px solid #999; background: linear-gradient(180deg, transparent 40%, #333 100%), linear-gradient(90deg, #f22, #ff2, #2e2, #2ee, #22f, #e2e, #f22); }
.editcolors .lab { margin-top: 5px; }

/* canvas */
.canvas { height: 565px; flex: none; background: linear-gradient(180deg, #c5d0e4 0%, #dfe7f3 100%); padding: 7px 0 0 5px; }
.page { width: 1242px; height: 463px; position: relative; background: #fff; box-shadow: 7px 7px 3px rgba(110, 120, 140, .28); }
.under { position: absolute; inset: 0; overflow: hidden; display: flex; flex-direction: column; }
.u-head { height: 35px; background: #a8a8a8; display: flex; align-items: flex-end; padding-left: 1116px; gap: 9px; flex: none; }
.ptab { height: 29px; flex: none; border-radius: 22px 22px 0 0 / 13px 13px 0 0; display: flex; align-items: center; justify-content: center; }
.settings { width: 86px; padding-top: 4px; background: linear-gradient(180deg, #5b7cc8, #1b3d92); color: #fff; font: bold 13px "DejaVu Sans", sans-serif; letter-spacing: .4px; box-shadow: inset -2px 2px 0 rgba(255, 255, 255, .35); }
.redtab { width: 40px; background: linear-gradient(180deg, #c96666, #a02c2c); }
.u-line { height: 2px; background: #173f8f; flex: none; }
.u-login { height: 18px; background: #e6e6e6; flex: none; padding-left: 1185px; white-space: nowrap; font: 9.8px/20px "DejaVu Sans", sans-serif; color: #111; }
.u-shadow { height: 5px; flex: none; background: linear-gradient(180deg, #9a9a9a, #fff); }
.u-body { flex: 1; display: flex; }
.u-side { width: 199px; }
.u-gut { width: 8px; background: #e6e6e6; border-right: 1px solid #b0b0b0; }
.u-main { flex: 1; }

.selection {
  position: absolute; left: 0; top: 0; width: 1033px; height: 399px;
  padding: 2px 1px 1px 3px;
  background:
    repeating-linear-gradient(90deg, #3d9bf0 0 4px, #fff 4px 6px) top left / 100% 1px no-repeat,
    repeating-linear-gradient(90deg, #3d9bf0 0 4px, #fff 4px 6px) bottom left / 100% 1px no-repeat,
    repeating-linear-gradient(180deg, #3d9bf0 0 4px, #fff 4px 6px) top left / 1px 100% no-repeat,
    repeating-linear-gradient(180deg, #3d9bf0 0 4px, #fff 4px 6px) top right / 1px 100% no-repeat,
    #fff;
  display: flex; flex-direction: column; overflow: hidden;
}
.bar { background: #00438c; color: #fff; font: bold 12.3px "Liberation Sans", sans-serif; flex: none; display: flex; align-items: center; }
.filterhead { height: 21px; padding-left: 3px; font: bold 12px "DejaVu Sans", sans-serif; }
.filters { height: 54px; background: #e4e4e4; flex: none; padding: 4px 0 0 7px; }
.frow { display: flex; align-items: center; height: 20px; }
.frow.second { margin-top: 6px; height: 21px; }
.flabel { font: bold 9.6px "DejaVu Sans", sans-serif; color: #111; white-space: nowrap; flex: none; letter-spacing: .1px; }
.fsel, .finp, .fbtn { font: 14px "Liberation Sans", sans-serif; color: #111; flex: none; white-space: nowrap; display: flex; align-items: center; }
.fsel { position: relative; height: 19px; background: #fff; border: 1px solid #a9a9a9; padding-left: 4px; }
.finp { background: #fff; border: 1px solid #a9a9a9; height: 20px; padding-left: 2px; }
.fbtn { height: 20px; background: #e1e1e1; border: 1px solid #adadad; justify-content: center; }
.arrow { position: absolute; right: 5px; top: 5px; width: 0; height: 0; border: 4px solid transparent; border-top: 7px solid #111; border-bottom: 0; }
.fs-preset { width: 117px; margin-left: 5px; }
.from { margin-left: 4px; width: 32px; }
.fi-date { width: 137px; margin-left: 4px; }
.cal { margin-left: 5px; flex: none; }
.to { margin-left: 4px; width: 16px; }
.nav { flex: none; }
.nav.left { margin-left: 4px; }
.fs-span { width: 78px; margin-left: 4px; }
.nav.right { margin-left: 6px; }
.refresh { width: 62px; margin-left: 4px; }
.clear1 { width: 48px; margin-left: 1px; }
.search { width: 43px; }
.fi-search { width: 243px; height: 21px; margin-left: 8px; }
.perpage { width: 97px; margin-left: 4px; letter-spacing: .3px; }
.fs-count { width: 47px; margin-left: 9px; }
.thumbs { width: 70px; margin-left: 4px; letter-spacing: .35px; }
.check { width: 10px; height: 12px; border: 1px solid #bbb; border-radius: 2px; margin-left: 8px; background: #e8e8e8; flex: none; }
.go { width: 33px; margin-left: 9px; }
.clear2 { width: 48px; margin-left: 4px; }
.spacer { height: 13px; flex: none; }
.showing { height: 20px; justify-content: center; padding-left: 92px; }
.tree, .tmpl { color: #fff; padding-left: 3px; flex: none; display: flex; align-items: center; white-space: pre; font-family: "Liberation Sans", sans-serif; }
.tree { height: 21px; background: #6d87ac; font-size: 13.3px; }
.tree b { font-size: 14.5px; }
.tmpl { height: 21px; background: #a7b6cb; font-size: 14px; }
.tmpl b { font-size: 14.3px; }
.graphrow { flex: 1; background: #f8f8f8; display: flex; padding: 6px 0 0 252px; }
.chart { flex: none; display: block; }
.gicons { margin-left: 9px; padding-top: 4px; display: flex; flex-direction: column; gap: 5px; }
.major { stroke: #f3a7a7; stroke-dasharray: 1 1.500; fill: none; }
.inbound { fill: #00cf00; }
.outfill { fill: url(#spike); }
.outbound { fill: none; stroke: #002a97; stroke-width: 1; }
.axis { stroke: #777; fill: none; }
.tip { fill: #8a1a1a; }
.chart text { font-family: "Liberation Sans", sans-serif; font-size: 10.900px; fill: #111; }
.ylab text { text-anchor: end; }
.xlab text { text-anchor: middle; }
.chart .mark { font-size: 8px; fill: #cfcfcf; }
.freehand { position: absolute; left: 0; top: 0; pointer-events: none; }
.freehand polyline { fill: none; stroke: #ed1c24; stroke-width: 1; }

/* handles */
.hd { position: absolute; width: 5px; height: 5px; background: #fff; border: 1px solid #666; }
.h-tl { left: -2px; top: -2px; }
.h-tc { left: 515px; top: -2px; }
.h-tr { left: 1030px; top: -2px; }
.h-ml { left: -2px; top: 197px; }
.h-mr { left: 1030px; top: 197px; }
.h-bl { left: -2px; top: 396px; }
.h-bc { left: 515px; top: 396px; }
.h-br { left: 1030px; top: 396px; }

/* status bar */
.status { height: 25px; flex: none; display: flex; background: #f0f0f0; border-top: 1px solid #dcdfe3; color: #2a3a4a; }
.st { height: 100%; border-right: 1px solid #dcdcdc; flex: none; display: flex; align-items: center; padding-left: 4px; }
.st1 { width: 156px; }
.st2 { width: 156px; padding-left: 5px; }
.st3 { width: 155px; padding-left: 5px; gap: 5px; font-size: 10.500px; color: #222; }
.st4 { width: 156px; }
.st5 { width: 539px; }
.zoom { flex: 1; display: flex; align-items: center; padding-left: 21px; }
.pct { width: 35px; color: #333; }
.slider { width: 85px; height: 4px; margin: 0 11px 0 10px; background: #d9dedb; position: relative; }
.thumb { position: absolute; left: 38px; top: -6px; width: 10px; height: 15px; background: #0a6fd4; clip-path: polygon(0 0, 100% 0, 100% 70%, 50% 100%, 0 70%); }

/* taskbar */
.taskbar { height: 40px; flex: none; background: #05060b; display: flex; color: #fff; }
.startbtn { width: 48px; display: flex; align-items: center; justify-content: center; }
.searchbox { width: 344px; background: #3a3a3a; display: flex; align-items: center; padding-left: 9px; }
.cortana { width: 21px; height: 21px; border-radius: 50%; border: 3px solid #eee; flex: none; }
.searchtext { margin-left: 6px; font-size: 14px; color: #a2a2a2; }
.mic { margin-left: auto; margin-right: 15px; }
.tb { width: 49px; display: flex; align-items: center; justify-content: center; position: relative; flex: none; }
.taskview { width: 50px; padding-right: 4px; }
.run::after { content: ""; position: absolute; left: 4px; right: 4px; bottom: 0; height: 2px; background: #76b9ed; }
.tb.active { background: #3b3e44; width: 47px; margin-left: 2px; }
.tb.active::after { left: 0; right: 0; }
.tray { margin-left: auto; display: flex; align-items: center; color: #fff; }
.chev { margin-right: 8px; }
.vol { margin-left: 4px; }
.eng { margin-left: 11px; font-size: 12px; color: #fff; }
.clock { width: 80px; display: flex; flex-direction: column; align-items: center; font-size: 12px; line-height: 19px; }
.notif { width: 45px; height: 100%; position: relative; display: flex; align-items: center; padding-left: 4px; padding-bottom: 5px; }
.badge { position: absolute; left: 11px; top: 19px; width: 16px; height: 16px; border-radius: 50%; background: #2b2b2b; border: 1px solid #777; font-size: 10px; display: flex; align-items: center; justify-content: center; color: #fff; }
```
